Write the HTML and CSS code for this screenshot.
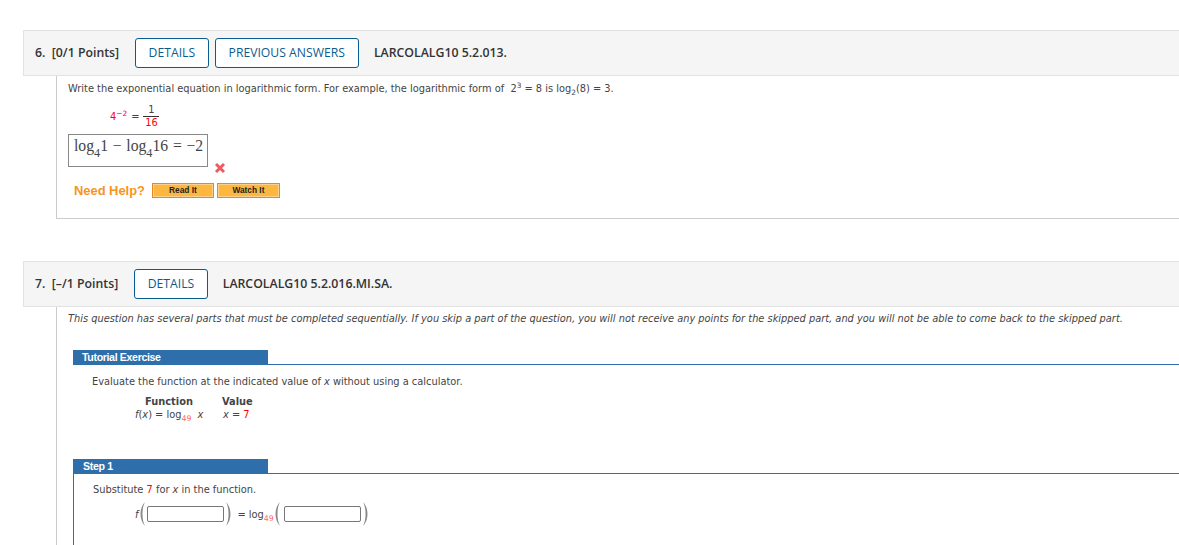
FILE: index.html
```html
<!DOCTYPE html>
<html lang="en">

<head>
    <meta charset="UTF-8">
    <title>Questions</title>
    <link rel="stylesheet" href="styles.css">
</head>

<body>
    <section class="question first">
        <div class="qhead">
            <span class="qnum">6. &nbsp;[0/1 Points]</span>
            <button class="qbtn">DETAILS</button>
            <button class="qbtn">PREVIOUS ANSWERS</button>
            <span class="qcode">LARCOLALG10 5.2.013.</span>
        </div>
        <div class="qbody closed">
            <p class="prompt">Write the exponential equation in logarithmic form. For example, the logarithmic form of &nbsp;2<sup>3</sup> = 8 is log<sub>2</sub>(8) = 3.</p>
            <div class="given">
                <span class="red">4<sup>&minus;2</sup></span>
                <span>=</span>
                <span class="frac"><span>1</span><span class="red under">16</span></span>
            </div>
            <div class="answer-row">
                <div class="answer">log<sub>4</sub>1 &minus; log<sub>4</sub>16 = &minus;2</div>
                <svg class="wrong" width="12" height="12" viewBox="0 0 12 12">
                    <path d="M2 2 L10 10 M10 2 L2 10" stroke="#ee5a5f" stroke-width="3" />
                </svg>
            </div>
            <div class="help">
                <span class="help-label">Need Help?</span>
                <a class="help-btn">Read It</a>
                <a class="help-btn">Watch It</a>
            </div>
        </div>
    </section>

    <section class="question second">
        <div class="qhead">
            <span class="qnum">7. &nbsp;[&ndash;/1 Points]</span>
            <button class="qbtn">DETAILS</button>
            <span class="qcode">LARCOLALG10 5.2.016.MI.SA.</span>
        </div>
        <div class="qbody">
            <p class="prompt notice">This question has several parts that must be completed sequentially. If you skip a part of the question, you will not receive any points for the skipped part, and you will not be able to come back to the skipped part.</p>

            <div class="bar"><span>Tutorial Exercise</span></div>
            <div class="tutorial">
                <p class="prompt">Evaluate the function at the indicated value of <i>x</i> without using a calculator.</p>
                <div class="fn-table">
                    <b class="fn-head">Function</b>
                    <b class="fn-head">Value</b>
                    <span><i>f</i>(<i>x</i>) = log<sub class="red-soft">49</sub> <i class="fn-arg">x</i></span>
                    <span class="fn-val"><i>x</i> = <span class="red">7</span></span>
                </div>
            </div>

            <div class="bar step"><span>Step 1</span></div>
            <div class="step-body">
                <p class="prompt">Substitute <span class="red">7</span> for <i>x</i> in the function.</p>
                <div class="subst">
                    <i>f</i>
                    <svg class="paren" width="7" height="24" viewBox="0 0 7 24"><path d="M6 0 C0 6 0 18 6 24 C2.6 18 2.6 6 6 0 Z" /></svg>
                    <input type="text">
                    <svg class="paren" width="7" height="24" viewBox="0 0 7 24"><path d="M1 0 C7 6 7 18 1 24 C4.4 18 4.4 6 1 0 Z" /></svg>
                    <span class="eq">= log<sub class="red-soft">49</sub></span>
                    <svg class="paren" width="7" height="24" viewBox="0 0 7 24"><path d="M6 0 C0 6 0 18 6 24 C2.6 18 2.6 6 6 0 Z" /></svg>
                    <input type="text">
                    <svg class="paren" width="7" height="24" viewBox="0 0 7 24"><path d="M1 0 C7 6 7 18 1 24 C4.4 18 4.4 6 1 0 Z" /></svg>
                </div>
            </div>
        </div>
    </section>
</body>

</html>
```

FILE: styles.css
```css
html,
body {
    height: 545px;
    overflow: hidden;
}

body {
    margin: 0;
    padding: 30px 0 0 23px;
    box-sizing: border-box;
    background: #fff;
    font-family: "DejaVu Sans", sans-serif;
    font-size: 9.84px;
    color: #444;
}

p {
    margin: 0;
}

.red {
    color: #f00;
}

.red-soft {
    color: #f66;
    font-size: 80%;
}

sup,
sub {
    font-size: 75%;
    line-height: 0;
}

.question.second {
    margin-top: 42px;
}

.qhead {
    display: flex;
    align-items: center;
    height: 46px;
    box-sizing: border-box;
    background: #f5f5f5;
    border: 1px solid #e2e2e2;
    border-right: none;
    padding: 0 0 1px 11px;
    font-family: "Open Sans", sans-serif;
    font-size: 12.3px;
}

.qnum {
    font-weight: 600;
    color: #333;
    margin-right: 16px;
    white-space: nowrap;
}

.qbtn {
    height: 30px;
    padding: 0 13px;
    margin-right: 6px;
    background: #fff;
    border: 1px solid #0a5c8f;
    border-radius: 3px;
    font-family: "Open Sans", sans-serif;
    font-size: 12.2px;
    color: #0a5c8f;
}

.qnum + .qbtn {
    padding: 0 12.5px;
}

.qcode {
    margin-left: 9px;
    font-weight: 600;
    color: #333;
}

.qbody {
    margin-left: 33px;
    border-left: 1px solid #ccc;
    padding-left: 11px;
}

.qbody.closed {
    height: 142px;
    border-bottom: 1px solid #ccc;
    box-sizing: content-box;
}

.prompt {
    padding-top: 7px;
    line-height: 12px;
    white-space: nowrap;
}

.given {
    display: flex;
    align-items: center;
    gap: 4px;
    margin: 8px 0 0 42px;
    height: 27px;
}

.frac {
    display: flex;
    flex-direction: column;
    align-items: center;
    line-height: 12px;
    width: 16px;
}

.under {
    border-top: 1px solid #333;
    width: 100%;
    text-align: center;
}

.answer-row {
    display: flex;
    align-items: flex-end;
    margin-top: 4px;
}

.answer {
    width: 140px;
    height: 33px;
    box-sizing: border-box;
    border: 1px solid #888;
    padding: 0 5px;
    font-family: "Liberation Serif", serif;
    font-size: 15.7px;
    line-height: 22px;
    word-spacing: 0.8px;
    color: #444;
    white-space: nowrap;
}

.answer sub {
    vertical-align: -6px;
    font-size: 78%;
}

.wrong {
    margin: 0 0 -7px 6px;
}

.help {
    display: flex;
    align-items: center;
    gap: 3px;
    margin: 16px 0 0 6px;
}

.help-label {
    margin-right: 4px;
    font-family: "Liberation Sans", sans-serif;
    font-size: 12.9px;
    font-weight: bold;
    color: #f7941d;
}

.help-btn {
    display: block;
    width: 60px;
    height: 13px;
    border: 1px solid #e0892d;
    box-shadow: inset 0 0 0 1px #fbd08a;
    background: #fdb73e;
    font-family: "Liberation Sans", sans-serif;
    font-size: 8.3px;
    font-weight: bold;
    line-height: 13px;
    text-align: center;
    color: #222;
}

.help-btn:last-child {
    width: 61px;
}

.notice {
    font-style: italic;
    padding-top: 6px;
}

.bar {
    margin: 25px 0 0 5px;
    height: 14px;
    border-bottom: 1px solid #2e6fab;
}

.bar span {
    display: block;
    width: 186px;
    height: 15px;
    padding-left: 9px;
    background: #2e6fab;
    font-family: "Liberation Sans", sans-serif;
    font-size: 10.6px;
    letter-spacing: -0.35px;
    font-weight: bold;
    line-height: 14px;
    color: #fff;
}

.bar.step span {
    padding-left: 10px;
    width: 185px;
}

.tutorial {
    margin-left: 24px;
}

.tutorial .prompt {
    padding-top: 11px;
}

.fn-table {
    display: grid;
    grid-template-columns: 87px auto;
    margin: 7px 0 0 43px;
    line-height: 13px;
}

.fn-head {
    color: #444;
    text-align: center;
    justify-self: start;
}

.fn-head:first-child {
    width: 68px;
}

.fn-arg {
    margin-left: 3px;
}

.fn-val {
    padding-left: 1px;
}

.bar.step {
    margin-top: 38px;
}

.step-body {
    margin-left: 5px;
    border-left: 1px solid #2e6fab;
    padding-left: 19px;
    height: 90px;
}

.step-body .prompt {
    padding-top: 10px;
}

.subst {
    display: flex;
    align-items: center;
    margin: 5px 0 0 42px;
    height: 26px;
}

.subst input {
    width: 77px;
    height: 16px;
    padding: 0;
    box-sizing: border-box;
    border: 1px solid #777;
    border-radius: 2px;
    background: #fff;
    margin: 0 1px;
}

.paren {
    fill: #888;
    flex: none;
}

.eq + .paren {
    margin-right: 2px;
}

.subst i {
    margin-right: 1px;
}

.eq {
    margin-left: 5px;
}
```
